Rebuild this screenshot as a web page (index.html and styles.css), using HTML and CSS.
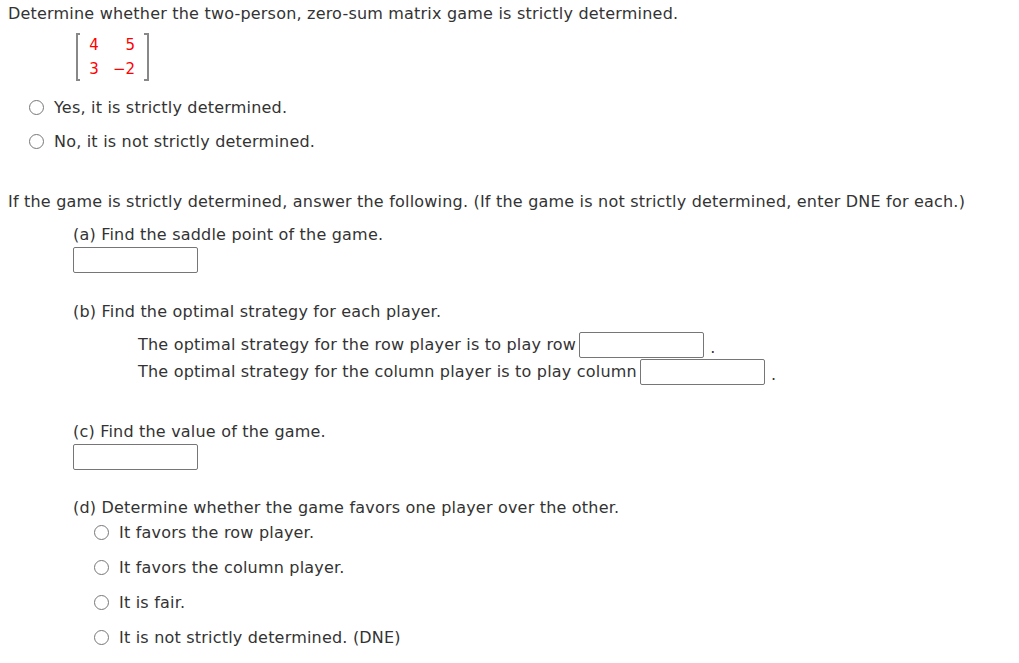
FILE: index.html
```html
<!DOCTYPE html>
<html>
<head>
<meta charset="utf-8">
<link rel="stylesheet" href="styles.css">
</head>
<body>
<div class="q">
  <p class="line first">Determine whether the two-person, zero-sum matrix game is strictly determined.</p>
  <div class="matrix">
    <span class="br left"></span>
    <div class="cells">
      <span>4</span><span>5</span>
      <span>3</span><span>&minus;2</span>
    </div>
    <span class="br right"></span>
  </div>
  <ul class="choices top">
    <li><span class="radio"></span>Yes, it is strictly determined.</li>
    <li><span class="radio"></span>No, it is not strictly determined.</li>
  </ul>

  <p class="line intro">If the game is strictly determined, answer the following. (If the game is not strictly determined, enter DNE for each.)</p>

  <div class="part pa">
    <p class="line">(a) Find the saddle point of the game.</p>
    <span class="box"></span>
  </div>

  <div class="part pb">
    <p class="line">(b) Find the optimal strategy for each player.</p>
    <div class="strat">
      <div class="srow r1">The optimal strategy for the row player is to play row <span class="box"></span><span class="dot">.</span></div>
      <div class="srow r2">The optimal strategy for the column player is to play column <span class="box"></span><span class="dot">.</span></div>
    </div>
  </div>

  <div class="part pc">
    <p class="line">(c) Find the value of the game.</p>
    <span class="box"></span>
  </div>

  <div class="part pd">
    <p class="line">(d) Determine whether the game favors one player over the other.</p>
    <ul class="choices sub">
      <li class="d1"><span class="radio"></span>It favors the row player.</li>
      <li><span class="radio"></span>It favors the column player.</li>
      <li><span class="radio"></span>It is fair.</li>
      <li><span class="radio"></span>It is not strictly determined. (DNE)</li>
    </ul>
  </div>
</div>
</body>
</html>
```

FILE: styles.css
```css
html, body {
  margin: 0;
  padding: 0;
  background: #fff;
}
body {
  font-family: "DejaVu Sans", Verdana, sans-serif;
  font-size: 16px;
  letter-spacing: 0.2px;
  color: #333;
  padding: 4px 8px 0 8px;
}
p.line {
  margin: 0;
  line-height: 20px;
}
.matrix {
  display: flex;
  align-items: stretch;
  margin: 9px 0 0 68px;
  height: 48px;
  width: 73px;
  box-sizing: border-box;
}
.br {
  width: 4px;
  border-top: 2px solid #888;
  border-bottom: 2px solid #888;
  box-sizing: border-box;
}
.br.left { border-left: 2px solid #888; }
.br.right { border-right: 2px solid #888; width: 5px; }
.cells {
  display: grid;
  grid-template-columns: 20px 31px;
  grid-template-rows: 1fr 1fr;
  align-items: center;
  font-size: 15px;
  letter-spacing: 0;
  color: #f00;
  padding: 0 9px 0 4px;
}
.cells span { text-align: right; }
.cells span:nth-child(odd) { text-align: center; }
.choices {
  list-style: none;
  margin: 0;
  padding: 0;
}
.choices li {
  display: flex;
  align-items: center;
  height: 20px;
}
.choices.top { margin: 16px 0 0 21px; }
.choices.top li + li { margin-top: 14px; }
.radio {
  display: inline-block;
  border: 1.5px solid #777;
  border-radius: 50%;
  margin-right: 10px;
  box-sizing: border-box;
  width: 15px;
  height: 15px;
}
.intro { margin-top: 41px !important; }
.part { margin-left: 65px; }
.pa { margin-top: 13px; }
.box {
  display: inline-block;
  width: 125px;
  height: 26px;
  border: 1px solid #767676;
  border-radius: 2px;
  box-sizing: border-box;
  vertical-align: middle;
  background: #fff;
}
.part > .box { display: block; margin-top: 2px; }
.pb { margin-top: 29px; }
.strat { margin-left: 65px; margin-top: 9px; }
.srow {
  display: flex;
  align-items: center;
  height: 27px;
}
.srow .box { margin-left: 3px; }
.srow .dot { margin-left: 6px; position: relative; top: 3px; }
.pc { margin-top: 37px; }
.pc > .box { margin-top: 2px; }
.pd { margin-top: 28px; }
.choices.sub { margin: 4px 0 0 21px; }
.choices.sub li + li { margin-top: 15px; }
```
